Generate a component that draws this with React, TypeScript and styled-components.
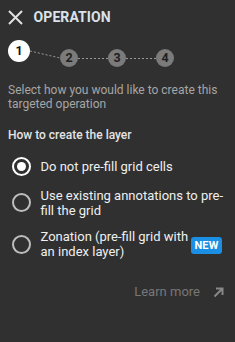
import React from "react";
import styled, { createGlobalStyle } from "styled-components";

const Global = createGlobalStyle`
  html, body { margin: 0; padding: 0; background: #303030; }
  body { font-family: Roboto, "Liberation Sans", Arial, sans-serif; -webkit-font-smoothing: antialiased; }
`;

const Panel = styled.div`
  width: 235px;
  height: 342px;
  background: #303030;
  box-sizing: border-box;
  display: flex;
  flex-direction: column;
  overflow: hidden;
`;

const Header = styled.div`
  height: 34px;
  display: flex;
  align-items: center;
  padding-left: 7.5px;
  gap: 11px;
`;

const CloseButton = styled.button`
  border: 0;
  background: none;
  padding: 0;
  width: 15px;
  height: 15px;
  display: flex;
  color: #e2e2e2;
  cursor: pointer;
`;

const Title = styled.h1`
  margin: 0;
  font-size: 14px;
  font-weight: 700;
  color: #dbe2ea;
  line-height: 16px;
  letter-spacing: 0.1px;
`;

const Stepper = styled.div`
  margin: 6px 0 0 8px;
  height: 27px;
  display: flex;
  align-items: flex-start;
`;

const StepCircle = styled.div<{ $active?: boolean }>`
  width: ${(p) => (p.$active ? 22 : 18)}px;
  height: ${(p) => (p.$active ? 22 : 18)}px;
  margin-top: ${(p) => (p.$active ? 0 : 9)}px;
  border-radius: 50%;
  background: ${(p) => (p.$active ? "#ffffff" : "#7b7b7b")};
  color: ${(p) => (p.$active ? "#111" : "#1e1e1e")};
  font-size: 12.5px;
  font-weight: 700;
  display: flex;
  align-items: center;
  justify-content: center;
  flex-shrink: 0;
  line-height: 1;
`;

const Connector = styled.svg`
  width: 30px;
  height: 27px;
  flex-shrink: 0;
  display: block;
`;

const Description = styled.p`
  margin: 15.5px 0 0 0;
  padding: 0 8px;
  font-size: 12px;
  line-height: 14.5px;
  color: #a6a6a6;
`;

const SectionLabel = styled.div`
  margin-top: 16px;
  padding: 0 8px;
  font-size: 12px;
  line-height: 15px;
  font-weight: 500;
  color: #e4e4e4;
`;

const Options = styled.div`
  margin-top: 13.5px;
  padding: 0 8px 0 12px;
  display: flex;
  flex-direction: column;
  gap: 11.5px;
`;

const OptionRow = styled.label`
  display: flex;
  align-items: center;
  cursor: pointer;
`;

const Radio = styled.span<{ $checked?: boolean }>`
  width: 19px;
  height: 19px;
  margin: 0.5px 0;
  box-sizing: border-box;
  border-radius: 50%;
  border: 2px solid ${(p) => (p.$checked ? "#ffffff" : "#bdbdbd")};
  display: flex;
  align-items: center;
  justify-content: center;
  flex-shrink: 0;
  &::after {
    content: "";
    width: 9px;
    height: 9px;
    border-radius: 50%;
    background: #ffffff;
    display: ${(p) => (p.$checked ? "block" : "none")};
  }
`;

const OptionText = styled.span`
  margin-left: 9.5px;
  flex: 1;
  font-size: 13px;
  line-height: 15px;
  color: #efefef;
`;

const Badge = styled.span`
  flex-shrink: 0;
  margin: 2px 5px 0 1px;
  width: 31px;
  height: 17px;
  border-radius: 3px;
  background: #1b8fe3;
  color: #ffffff;
  font-size: 11px;
  font-weight: 700;
  display: flex;
  align-items: center;
  justify-content: center;
  letter-spacing: 0.2px;
`;

const LearnRow = styled.a`
  margin-top: 24.5px;
  align-self: flex-end;
  margin-right: 11px;
  display: flex;
  align-items: center;
  gap: 13px;
  color: #777777;
  font-size: 13px;
  line-height: 15px;
  text-decoration: none;
`;

const ArrowIcon = styled.svg`
  width: 11px;
  height: 11px;
  display: block;
  margin-top: 2px;
`;

const steps = [1, 2, 3, 4];

const options = [
  { label: "Do not pre-fill grid cells", checked: true },
  { label: "Use existing annotations to pre-fill the grid" },
  { label: "Zonation (pre-fill grid with an index layer)", badge: "NEW" },
];

export default function App() {
  return (
    <>
      <Global />
      <Panel>
        <Header>
          <CloseButton aria-label="Close">
            <svg width="15" height="15" viewBox="0 0 15 15">
              <path d="M1 1 L14 14 M14 1 L1 14" stroke="currentColor" strokeWidth="2" fill="none" />
            </svg>
          </CloseButton>
          <Title>OPERATION</Title>
        </Header>

        <Stepper>
          {steps.map((s, i) => (
            <React.Fragment key={s}>
              {i > 0 && (
                <Connector viewBox="0 0 30 27">
                  {i === 1 ? (
                    <line x1="0" y1="11" x2="30" y2="18" stroke="#9a9a9a" strokeWidth="1" strokeDasharray="2 2" />
                  ) : (
                    <line x1="0" y1="18.5" x2="30" y2="18.5" stroke="#9a9a9a" strokeWidth="1" strokeDasharray="2 2" />
                  )}
                </Connector>
              )}
              <StepCircle $active={i === 0}>{s}</StepCircle>
            </React.Fragment>
          ))}
        </Stepper>

        <Description>Select how you would like to create this targeted operation</Description>

        <SectionLabel>How to create the layer</SectionLabel>

        <Options>
          {options.map((o) => (
            <OptionRow key={o.label}>
              <Radio $checked={o.checked} />
              <OptionText>{o.label}</OptionText>
              {o.badge && <Badge>{o.badge}</Badge>}
            </OptionRow>
          ))}
        </Options>

        <LearnRow href="#">
          Learn more
          <ArrowIcon viewBox="0 0 11 11">
            <path d="M1.5 9.5 L9.5 1.5 M3 1.5 H9.5 V8" stroke="#888" strokeWidth="2" fill="none" />
          </ArrowIcon>
        </LearnRow>
      </Panel>
    </>
  );
}
